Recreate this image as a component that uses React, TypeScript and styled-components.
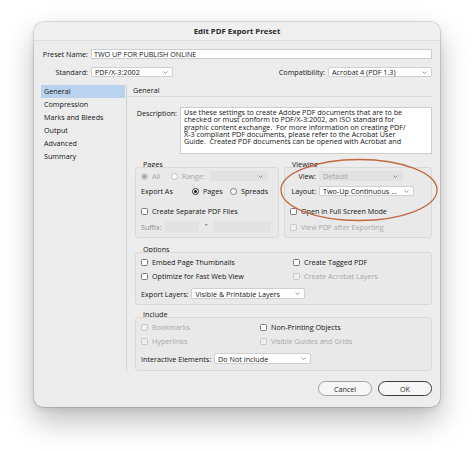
import React from 'react';
import styled, { createGlobalStyle } from 'styled-components';

const GlobalStyle = createGlobalStyle`
  html, body {
    margin: 0;
    padding: 0;
    background: #ffffff;
  }
  body {
    font-family: 'Open Sans', 'DejaVu Sans', sans-serif;
    font-size: 7.2px;
    color: #141414;
  }
  * {
    box-sizing: border-box;
  }
`;

const Page = styled.div`
  position: relative;
  width: 474px;
  height: 452px;
  padding: 22px 0 0 34px;
`;

const Dialog = styled.div`
  width: 406px;
  height: 385px;
  background: #ececec;
  border-radius: 9px;
  box-shadow: 0 0 0 0.5px rgba(0, 0, 0, 0.22), 0 14px 30px rgba(0, 0, 0, 0.26),
    0 2px 6px rgba(0, 0, 0, 0.1);
  display: flex;
  flex-direction: column;
  overflow: hidden;
`;

const TitleBar = styled.div`
  flex: none;
  height: 19px;
  display: flex;
  align-items: center;
  justify-content: center;
  font-size: 7.8px;
  font-weight: 700;
  color: #2a2a2a;
  background: #efefef;
  border-bottom: 1px solid #dedede;
`;

const Content = styled.div`
  flex: 1;
  display: flex;
  flex-direction: column;
  padding: 8px 8px 0 7px;
`;

const Row = styled.div<{ $mt?: number; $h?: number }>`
  display: flex;
  align-items: center;
  height: ${p => p.$h ?? 10}px;
  margin-top: ${p => p.$mt ?? 0}px;
  white-space: nowrap;
`;

const Spacer = styled.div`
  flex: 1;
`;

const Label = styled.span<{ $w?: number; $left?: boolean; $disabled?: boolean }>`
  flex: none;
  width: ${p => (p.$w ? `${p.$w}px` : 'auto')};
  text-align: ${p => (p.$left ? 'left' : 'right')};
  margin-right: 3px;
  color: ${p => (p.$disabled ? '#8c8c8c' : 'inherit')};
`;

const TextField = styled.div`
  flex: 1;
  height: 100%;
  display: flex;
  align-items: center;
  padding-left: 2px;
  background: #ffffff;
  border: 1px solid #cdcdcd;
`;

const SelectBox = styled.div<{ $w: number; $disabled?: boolean }>`
  flex: none;
  width: ${p => p.$w}px;
  height: 100%;
  display: flex;
  align-items: center;
  padding: 0 4px 0 3px;
  border-radius: 2px;
  background: ${p => (p.$disabled ? '#e1e1e1' : '#ffffff')};
  border: 1px solid ${p => (p.$disabled ? '#e1e1e1' : '#cfcfcf')};
  color: ${p => (p.$disabled ? '#a3a3a3' : '#141414')};

  svg {
    margin-left: auto;
  }
`;

const Field = styled.div<{ $w: number }>`
  flex: none;
  width: ${p => p.$w}px;
  height: 100%;
  background: #e2e2e2;
`;

const Body = styled.div`
  display: flex;
  margin-top: 7px;
  padding-bottom: 1px;
`;

const Sidebar = styled.div`
  flex: none;
  width: 86px;
  padding: 1px 1px 0 0;
  border-right: 1px solid #d4d4d4;
`;

const NavItem = styled.div<{ $active?: boolean }>`
  height: 13px;
  line-height: 13px;
  padding-left: 3px;
  background: ${p => (p.$active ? '#b9d2ee' : 'transparent')};
`;

const Main = styled.div`
  flex: 1;
  display: flex;
  flex-direction: column;
`;

const PanelHeader = styled.div`
  height: 13px;
  line-height: 13px;
  padding-left: 6px;
  border-bottom: 1px solid #dadada;
`;

const DescRow = styled.div`
  display: flex;
  margin: 10px 0 0 6px;
  height: 47px;
`;

const DescLabel = styled.span`
  flex: none;
  width: 44px;
  text-align: right;
  margin-right: 3px;
  padding-top: 1px;
`;

const DescBox = styled.div`
  flex: 1;
  background: #ffffff;
  border: 1px solid #cdcdcd;
  padding: 1px 3px;
  overflow: hidden;
  line-height: 7.35px;
  white-space: pre;
`;

const Groups = styled.div<{ $mt: number }>`
  display: flex;
  gap: 5px;
  margin: ${p => p.$mt}px 0 0 8px;
`;

const Group = styled.div<{ $w?: number }>`
  display: flex;
  flex-direction: column;
  flex: ${p => (p.$w ? `none` : '1')};
  width: ${p => (p.$w ? `${p.$w}px` : 'auto')};
`;

const GroupTitle = styled.div`
  height: 8px;
  line-height: 8px;
  padding-left: 8px;
  margin-bottom: -1px;
`;

const GroupBox = styled.div<{ $pt: number; $pb: number }>`
  flex: 1;
  padding: ${p => p.$pt}px 5px ${p => p.$pb}px 5px;
  border: 1px solid #d9d9d9;
  border-radius: 3px;
  background: #e9e9e9;
`;

const Option = styled.div<{ $w?: number; $disabled?: boolean }>`
  flex: none;
  display: flex;
  align-items: center;
  width: ${p => (p.$w ? `${p.$w}px` : 'auto')};
  color: ${p => (p.$disabled ? '#a8a8a8' : '#141414')};
`;

const CheckMark = styled.span<{ $disabled?: boolean }>`
  flex: none;
  width: 7px;
  height: 7px;
  margin-right: 4px;
  border-radius: 1.5px;
  background: ${p => (p.$disabled ? '#efefef' : '#ffffff')};
  border: 1px solid ${p => (p.$disabled ? '#c6c6c6' : '#7a7a7a')};
`;

const RadioMark = styled.span<{ $on?: boolean; $disabled?: boolean }>`
  flex: none;
  width: 7px;
  height: 7px;
  margin-right: 4px;
  border-radius: 50%;
  display: flex;
  align-items: center;
  justify-content: center;
  background: ${p => (p.$on && p.$disabled ? '#cdcdcd' : '#ffffff')};
  border: 1px solid
    ${p => (p.$disabled ? '#bdbdbd' : p.$on ? '#2e2e2e' : '#7a7a7a')};

  &::after {
    content: '';
    display: ${p => (p.$on ? 'block' : 'none')};
    width: 3px;
    height: 3px;
    border-radius: 50%;
    background: ${p => (p.$disabled ? '#9c9c9c' : '#1e1e1e')};
  }
`;

const Arrow = styled.span`
  flex: none;
  width: 15px;
  text-align: center;
  color: #8a8a8a;
  font-size: 5px;
  align-self: flex-start;
`;

const Footer = styled.div`
  display: flex;
  justify-content: flex-end;
  gap: 6px;
  margin-top: 9px;
`;

const Button = styled.div<{ $primary?: boolean }>`
  width: 54px;
  height: 15px;
  display: flex;
  align-items: center;
  justify-content: center;
  border-radius: 8px;
  background: #f6f6f6;
  color: #2a2a2a;
  border: ${p => (p.$primary ? '1.3px solid #3c3c3c' : '1px solid #a2a2a2')};
`;

const Annotation = styled.svg`
  position: absolute;
  left: 0;
  top: 0;
  pointer-events: none;
`;

const Chevron = () => (
  <svg width="5" height="3" viewBox="0 0 5 3">
    <polyline points="0.5,0.5 2.5,2.5 4.5,0.5" fill="none" stroke="#7c7c7c" strokeWidth="0.8" />
  </svg>
);

const Select = ({ w, value, disabled }: { w: number; value: string; disabled?: boolean }) => (
  <SelectBox $w={w} $disabled={disabled}>
    {value}
    <Chevron />
  </SelectBox>
);

const Check = ({ label, w, disabled }: { label: string; w?: number; disabled?: boolean }) => (
  <Option $w={w} $disabled={disabled}>
    <CheckMark $disabled={disabled} />
    {label}
  </Option>
);

const Radio = ({ label, w, on, disabled }: { label: string; w?: number; on?: boolean; disabled?: boolean }) => (
  <Option $w={w} $disabled={disabled}>
    <RadioMark $on={on} $disabled={disabled} />
    {label}
  </Option>
);

const sections = ['General', 'Compression', 'Marks and Bleeds', 'Output', 'Advanced', 'Summary'];

const description = [
  'Use these settings to create Adobe PDF documents that are to be',
  'checked or must conform to PDF/X-3:2002, an ISO standard for',
  'graphic content exchange.  For more information on creating PDF/',
  'X-3 compliant PDF documents, please refer to the Acrobat User',
  'Guide.  Created PDF documents can be opened with Acrobat and',
].join('\n');

export default function App() {
  return (
    <Page>
      <GlobalStyle />
      <Dialog>
        <TitleBar>Edit PDF Export Preset</TitleBar>
        <Content>
          <Row>
            <Label $w={47}>Preset Name:</Label>
            <TextField>TWO UP FOR PUBLISH ONLINE</TextField>
          </Row>
          <Row $mt={8}>
            <Label $w={47}>Standard:</Label>
            <Select w={82} value="PDF/X-3:2002" />
            <Spacer />
            <Label>Compatibility:</Label>
            <Select w={104} value="Acrobat 4 (PDF 1.3)" />
          </Row>

          <Body>
            <Sidebar>
              {sections.map((s, i) => (
                <NavItem key={s} $active={i === 0}>
                  {s}
                </NavItem>
              ))}
            </Sidebar>

            <Main>
              <PanelHeader>General</PanelHeader>
              <DescRow>
                <DescLabel>Description:</DescLabel>
                <DescBox>{description}</DescBox>
              </DescRow>

              <Groups $mt={6}>
                <Group $w={144}>
                  <GroupTitle>Pages</GroupTitle>
                  <GroupBox $pt={3} $pb={5}>
                    <Row>
                      <Radio label="All" on disabled w={30} />
                      <Radio label="Range:" disabled w={39} />
                      <Select w={58} value="" disabled />
                    </Row>
                    <Row $mt={5}>
                      <Label $w={48} $left>
                        Export As
                      </Label>
                      <Radio label="Pages" on w={38} />
                      <Radio label="Spreads" />
                    </Row>
                    <Row $mt={10}>
                      <Check label="Create Separate PDF Files" />
                    </Row>
                    <Row $mt={5} $h={11}>
                      <Label $w={21} $left $disabled>
                        Suffix:
                      </Label>
                      <Field $w={34} />
                      <Arrow>▸</Arrow>
                      <Field $w={57} />
                    </Row>
                  </GroupBox>
                </Group>

                <Group>
                  <GroupTitle>Viewing</GroupTitle>
                  <GroupBox $pt={3} $pb={5}>
                    <Row>
                      <Label $w={26}>View:</Label>
                      <Select w={84} value="Default" disabled />
                    </Row>
                    <Row $mt={5}>
                      <Label $w={26}>Layout:</Label>
                      <Select w={95} value="Two-Up Continuous ..." />
                    </Row>
                    <Row $mt={10}>
                      <Check label="Open in Full Screen Mode" />
                    </Row>
                    <Row $mt={6}>
                      <Check label="View PDF after Exporting" disabled />
                    </Row>
                  </GroupBox>
                </Group>
              </Groups>

              <Groups $mt={7}>
                <Group>
                  <GroupTitle>Options</GroupTitle>
                  <GroupBox $pt={4} $pb={5}>
                    <Row>
                      <Check label="Embed Page Thumbnails" w={152} />
                      <Check label="Create Tagged PDF" />
                    </Row>
                    <Row $mt={4}>
                      <Check label="Optimize for Fast Web View" w={152} />
                      <Check label="Create Acrobat Layers" disabled />
                    </Row>
                    <Row $mt={7} $h={11}>
                      <Label>Export Layers:</Label>
                      <Select w={114} value="Visible & Printable Layers" />
                    </Row>
                  </GroupBox>
                </Group>
              </Groups>

              <Groups $mt={5}>
                <Group>
                  <GroupTitle>Include</GroupTitle>
                  <GroupBox $pt={4} $pb={6}>
                    <Row>
                      <Check label="Bookmarks" disabled w={119} />
                      <Check label="Non-Printing Objects" />
                    </Row>
                    <Row $mt={4}>
                      <Check label="Hyperlinks" disabled w={119} />
                      <Check label="Visible Guides and Grids" disabled />
                    </Row>
                    <Row $mt={7} $h={11}>
                      <Label>Interactive Elements:</Label>
                      <Select w={97} value="Do Not Include" />
                    </Row>
                  </GroupBox>
                </Group>
              </Groups>
            </Main>
          </Body>

          <Footer>
            <Button>Cancel</Button>
            <Button $primary>OK</Button>
          </Footer>
        </Content>
      </Dialog>

      <Annotation width="474" height="452" viewBox="0 0 474 452">
        <ellipse cx="359" cy="190" rx="78" ry="30.5" fill="none" stroke="#c2683f" strokeWidth="1.3" />
      </Annotation>
    </Page>
  );
}
